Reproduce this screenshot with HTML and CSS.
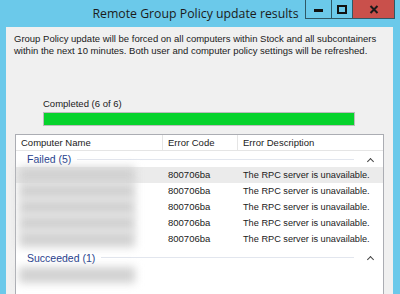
FILE: index.html
```html
<!DOCTYPE html>
<html lang="en">
<head>
  <meta charset="UTF-8" />
  <title>Remote Group Policy update results</title>
  <link rel="stylesheet" href="styles.css">
</head>
<body>
  <div class="window">
    <div class="titlebar">
      <div class="title">Remote Group Policy update results</div>
      <div class="caption-buttons">
        <div class="cap-btn min"><span class="min-glyph"></span></div>
        <div class="cap-btn max"><span class="max-glyph"></span></div>
        <div class="cap-btn close">
          <svg width="10" height="9" viewBox="0 0 10 9"><path d="M1.5 1 L8.5 8 M8.5 1 L1.5 8" stroke="#1a1a1a" stroke-width="2"/></svg>
        </div>
      </div>
    </div>
    <div class="content">
      <p class="intro">Group Policy update will be forced on all computers within Stock and all subcontainers within the next 10 minutes. Both user and computer policy settings will be refreshed.</p>
      <div class="progress">
        <div class="progress-label">Completed (6 of 6)</div>
        <div class="progress-bar"><div class="progress-fill" style="width:100%"></div></div>
      </div>
      <div class="list">
        <div class="list-head">
          <div class="col c1">Computer Name</div>
          <div class="col c2">Error Code</div>
          <div class="col c3">Error Description</div>
        </div>
        <div class="group">
          <span class="group-name">Failed (5)</span>
          <span class="group-line"></span>
          <span class="chevron"></span>
        </div>
        <div class="row hover">
          <div class="col c1"><span class="redact"></span></div>
          <div class="col c2">800706ba</div>
          <div class="col c3">The RPC server is unavailable.</div>
        </div>
        <div class="row">
          <div class="col c1"><span class="redact"></span></div>
          <div class="col c2">800706ba</div>
          <div class="col c3">The RPC server is unavailable.</div>
        </div>
        <div class="row">
          <div class="col c1"><span class="redact"></span></div>
          <div class="col c2">800706ba</div>
          <div class="col c3">The RPC server is unavailable.</div>
        </div>
        <div class="row">
          <div class="col c1"><span class="redact"></span></div>
          <div class="col c2">800706ba</div>
          <div class="col c3">The RPC server is unavailable.</div>
        </div>
        <div class="row">
          <div class="col c1"><span class="redact"></span></div>
          <div class="col c2">800706ba</div>
          <div class="col c3">The RPC server is unavailable.</div>
        </div>
        <div class="group succeeded">
          <span class="group-name">Succeeded (1)</span>
          <span class="group-line"></span>
          <span class="chevron"></span>
        </div>
        <div class="row">
          <div class="col c1"><span class="redact"></span></div>
          <div class="col c2"></div>
          <div class="col c3"></div>
        </div>
      </div>
    </div>
  </div>
</body>
</html>
```

FILE: styles.css
```css
html, body {
  margin: 0;
  height: 100%;
  overflow: hidden;
}
body {
  font-family: "Liberation Sans", Arial, sans-serif;
  background: #6bc9ea;
}
.window {
  height: 100%;
  display: flex;
  flex-direction: column;
  padding: 0 7px 0 6px;
  background: #6bc9ea;
}
.titlebar {
  height: 27px;
  display: flex;
  align-items: flex-start;
  flex-shrink: 0;
}
.title {
  flex: 1;
  text-align: center;
  font-family: "Open Sans", sans-serif;
  font-size: 12.3px;
  line-height: 27px;
  color: #1b1b1b;
  padding-left: 80px;
  white-space: nowrap;
}
.caption-buttons {
  display: flex;
  height: 18px;
  border: 1px solid #2f5866;
  border-top: 0;
  margin-right: -2px;
}
.cap-btn {
  height: 18px;
  display: flex;
  align-items: center;
  justify-content: center;
  background: #6bc9ea;
}
.cap-btn.min {
  width: 25px;
  border-right: 1px solid #2f5866;
}
.cap-btn.max {
  width: 20px;
  border-right: 1px solid #2f5866;
}
.cap-btn.close {
  width: 41px;
  background: #c9504b;
}
.min-glyph {
  width: 9px;
  height: 3px;
  background: #111;
  margin-top: 3px;
}
.max-glyph {
  width: 6px;
  height: 5px;
  border: 2px solid #111;
}
.content {
  flex: 1;
  background: #f0f0f0;
  padding: 6px 9px 0 8px;
  display: flex;
  flex-direction: column;
  font-size: 9.5px;
  color: #1a1a1a;
}
.intro {
  margin: 0;
  line-height: 12px;
}
.progress {
  margin: 40px 0 0 29px;
  width: 312px;
}
.progress-label {
  line-height: 13px;
  margin-bottom: 2px;
}
.progress-bar {
  height: 14px;
  background: #e6e6e6;
  border: 1px solid #bcbcbc;
  box-sizing: border-box;
}
.progress-fill {
  height: 100%;
  background: #06d32c;
}
.list {
  margin: 8px 0 0 1px;
  flex: 1;
  background: #fff;
  border: 1px solid #abadb3;
  border-bottom: 0;
}
.list-head {
  display: flex;
  height: 15px;
  border-bottom: 1px solid #e5e5e5;
}
.list-head .col {
  border-right: 1px solid #e5e5e5;
  line-height: 15px;
}
.col {
  padding-left: 5px;
  box-sizing: border-box;
  white-space: nowrap;
}
.c1 { width: 147px; }
.c2 { width: 75px; }
.c3 { flex: 1; font-size: 9.2px; }
.list-head .c3 { border-right: 0; font-size: 9.5px; }
.group {
  display: flex;
  align-items: center;
  height: 16px;
  padding: 0 10px 0 11px;
  gap: 6px;
}
.group.succeeded {
  height: 19px;
  padding-top: 1px;
}
.group-name {
  color: #1e3c8c;
  font-size: 10.5px;
}
.group-line {
  flex: 1;
  height: 1px;
  background: #e2e6ee;
}
.chevron {
  width: 4px;
  height: 4px;
  border-left: 1.5px solid #444;
  border-top: 1.5px solid #444;
  transform: rotate(45deg);
  margin: 4px 0 0 8px;
}
.row {
  display: flex;
  height: 16px;
  line-height: 16px;
}
.row.hover {
  background: #ebebeb;
}
.row .c1 {
  padding-left: 3px;
}
.redact {
  display: block;
  height: 16px;
  width: 116px;
  background: #d2d2d2;
  filter: blur(4px);
}
```
